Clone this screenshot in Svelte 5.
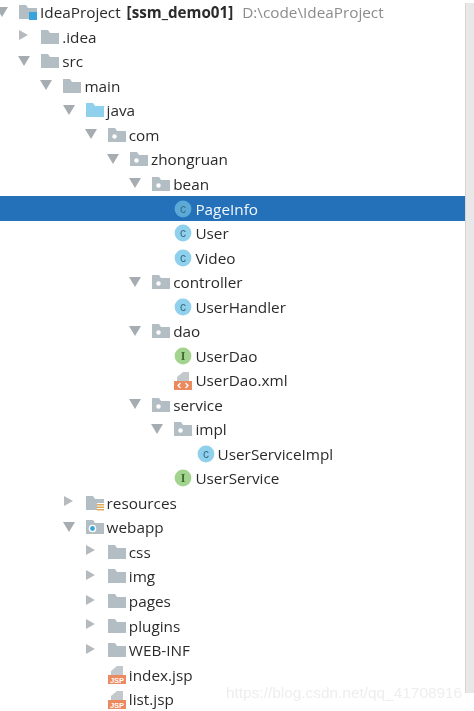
<script>
  const rows = [
    { d: 0, arrow: 'down', icon: 'module', name: 'IdeaProject', bold: '[ssm_demo01]', path: 'D:\\code\\IdeaProject' },
    { d: 1, arrow: 'right', icon: 'folder', name: '.idea' },
    { d: 1, arrow: 'down', icon: 'folder', name: 'src' },
    { d: 2, arrow: 'down', icon: 'folder', name: 'main' },
    { d: 3, arrow: 'down', icon: 'source', name: 'java' },
    { d: 4, arrow: 'down', icon: 'package', name: 'com' },
    { d: 5, arrow: 'down', icon: 'package', name: 'zhongruan' },
    { d: 6, arrow: 'down', icon: 'package', name: 'bean' },
    { d: 7, icon: 'class', name: 'PageInfo', selected: true },
    { d: 7, icon: 'class', name: 'User' },
    { d: 7, icon: 'class', name: 'Video' },
    { d: 6, arrow: 'down', icon: 'package', name: 'controller' },
    { d: 7, icon: 'class', name: 'UserHandler' },
    { d: 6, arrow: 'down', icon: 'package', name: 'dao' },
    { d: 7, icon: 'interface', name: 'UserDao' },
    { d: 7, icon: 'xml', name: 'UserDao.xml' },
    { d: 6, arrow: 'down', icon: 'package', name: 'service' },
    { d: 7, arrow: 'down', icon: 'package', name: 'impl' },
    { d: 8, icon: 'class', name: 'UserServiceImpl' },
    { d: 7, icon: 'interface', name: 'UserService' },
    { d: 3, arrow: 'right', icon: 'resources', name: 'resources' },
    { d: 3, arrow: 'down', icon: 'web', name: 'webapp' },
    { d: 4, arrow: 'right', icon: 'folder', name: 'css' },
    { d: 4, arrow: 'right', icon: 'folder', name: 'img' },
    { d: 4, arrow: 'right', icon: 'folder', name: 'pages' },
    { d: 4, arrow: 'right', icon: 'folder', name: 'plugins' },
    { d: 4, arrow: 'right', icon: 'folder', name: 'WEB-INF' },
    { d: 4, icon: 'jsp', name: 'index.jsp' },
    { d: 4, icon: 'jsp', name: 'list.jsp' }
  ];
</script>

<div class="page">
  <ul class="tree">
    {#each rows as row}
      <li class="row" class:selected={row.selected} style="padding-left: {row.d * 22.2}px">
        <span class="arrow">
          {#if row.arrow === 'down'}
            <svg width="14" height="14" viewBox="0 0 14 14"><path d="M1 3h12L7 13z" fill="#a6adb2" /></svg>
          {:else if row.arrow === 'right'}
            <svg width="14" height="14" viewBox="0 0 14 14"><path d="M2 2v10L11 7z" fill="#b4babe" /></svg>
          {/if}
        </span>
        <span class="icon">
          {#if row.icon === 'folder' || row.icon === 'module' || row.icon === 'resources'}
            <svg width="18" height="16" viewBox="0 0 18 16">
              <path d="M0 1h7l2 3h9v11H0z" fill="#b3bdc4" />
              {#if row.icon === 'module'}
                <rect x="10" y="8" width="8" height="8" fill="#37a5dc" />
              {/if}
              {#if row.icon === 'resources'}
                <rect x="11" y="8" width="8" height="8" fill="#fff" />
                <path d="M11 9h7v1.4h-7zM11 11.5h7v1.4h-7zM11 14h7v1.4h-7z" fill="#e3a857" />
              {/if}
            </svg>
          {:else if row.icon === 'source'}
            <svg width="18" height="16" viewBox="0 0 18 16"><path d="M0 1h7l2 3h9v11H0z" fill="#8fd0ec" /></svg>
          {:else if row.icon === 'package'}
            <svg width="18" height="16" viewBox="0 0 18 16">
              <path d="M0 1h7l2 3h9v11H0z" fill="#b3bdc4" />
              <circle cx="6.5" cy="9.5" r="2.2" fill="#fff" />
            </svg>
          {:else if row.icon === 'web'}
            <svg width="18" height="16" viewBox="0 0 18 16">
              <path d="M0 1h7l2 3h9v11H0z" fill="#b3bdc4" />
              <circle cx="6.5" cy="9.5" r="3.8" fill="#fff" />
              <circle cx="6.5" cy="9.5" r="2.4" fill="#37a5dc" />
            </svg>
          {:else if row.icon === 'class'}
            <svg width="18" height="18" viewBox="0 0 18 18">
              <circle cx="9" cy="9" r="8.4" fill={row.selected ? '#5aa9d6' : '#8fd0ec'} />
              <text x="9" y="12.8" class="glyph" fill="#3b6f86">c</text>
            </svg>
          {:else if row.icon === 'interface'}
            <svg width="18" height="18" viewBox="0 0 18 18">
              <circle cx="9" cy="9" r="8.4" fill="#a3d48f" />
              <text x="9" y="13" class="glyph serif" fill="#3f6b33">I</text>
            </svg>
          {:else if row.icon === 'xml'}
            <svg width="18" height="19" viewBox="0 0 18 19">
              <path d="M9 1h6v9H3V6z" fill="#c2c8cc" />
              <rect x="0" y="10" width="18" height="9" fill="#ea8a5e" />
              <path d="M6.5 12 4 14.5 6.500 17M11.500 12 14 14.500 11.500 17" fill="none" stroke="#fff" stroke-width="1.300" />
            </svg>
          {:else if row.icon === 'jsp'}
            <svg width="18" height="19" viewBox="0 0 18 19">
              <path d="M9 1h6v9H3V6z" fill="#c2c8cc" />
              <rect x="0" y="10" width="18" height="9" fill="#ea8a5e" />
              <text x="9" y="17.500" class="jsp" fill="#fff">JSP</text>
            </svg>
          {/if}
        </span>
        <span class="name">{row.name}</span>
        {#if row.bold}<b class="bold">{row.bold}</b>{/if}
        {#if row.path}<span class="path">{row.path}</span>{/if}
      </li>
    {/each}
  </ul>

  <div class="scrollbar"></div>
  <div class="watermark">https://blog.csdn.net/qq_41708916</div>
</div>

<style>
  :global(body) {
    margin: 0;
    background: #fff;
  }

  .page {
    position: relative;
    width: 474px;
    height: 711px;
    overflow: hidden;
    background: #fff;
    font-family: "Open Sans", "Noto Sans", sans-serif;
    color: #2b2b2b;
  }

  .tree {
    list-style: none;
    margin: 0;
    padding: 0;
    filter: blur(0.35px);
  }

  .row {
    display: flex;
    align-items: center;
    height: 24.54px;
    font-size: 15.3px;
    white-space: nowrap;
    box-sizing: border-box;
  }

  .row.selected {
    background: #2470b9;
    color: #f2f7fb;
  }

  .arrow {
    flex: none;
    width: 19px;
    height: 14px;
    display: flex;
    margin-top: -3px;
  }

  .arrow svg {
    margin-left: -5px;
  }

  .icon {
    flex: none;
    width: 21px;
    height: 19px;
    display: flex;
    align-items: center;
  }

  .bold {
    margin-left: 6px;
    font-weight: 700;
    font-size: 15.2px;
  }

  .path {
    margin-left: 9px;
    color: #8c8c8c;
  }

  .glyph {
    font-family: "Liberation Sans", sans-serif;
    font-size: 12px;
    text-anchor: middle;
  }

  .glyph.serif {
    font-family: "Liberation Serif", serif;
    font-weight: 700;
  }

  .jsp {
    font-family: "Liberation Sans", sans-serif;
    font-size: 7.500px;
    font-weight: 700;
    text-anchor: middle;
  }

  .scrollbar {
    position: absolute;
    top: 3px;
    left: 465px;
    width: 9px;
    height: 690px;
    background: #e8e8e8;
    border-left: 1px solid #d6d6d6;
    box-sizing: border-box;
  }

  .watermark {
    position: absolute;
    left: 226px;
    top: 684px;
    font-family: "Liberation Sans", sans-serif;
    font-size: 15.400px;
    color: #eeeeee;
    filter: blur(0.5px);
  }
</style>
